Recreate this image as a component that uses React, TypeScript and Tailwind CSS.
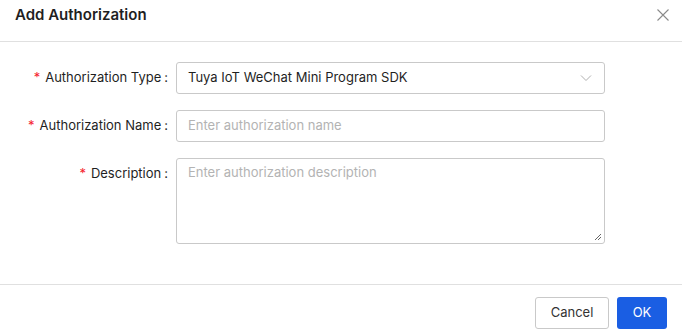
import React from "react";

const font = { fontFamily: "Inter, 'Noto Sans', sans-serif" };

function Label({ text }: { text: string }) {
  return (
    <div className="w-[176px] shrink-0 flex justify-end items-center pr-[8px] h-8 text-[13px] text-[#1f1f1f]">
      <span className="text-[#f5222d] mr-[5px] text-[13px]">*</span>
      <span>{text}</span>
      <span className="ml-[3px]">:</span>
    </div>
  );
}

export default function App() {
  return (
    <div className="w-[682px] h-[332px] bg-white flex flex-col" style={font}>
      <div className="h-[42px] flex items-center justify-between pl-[15px] pr-[12px] border-b border-[#e0e0e0]">
        <div className="text-[15px] font-semibold text-[#1f1f1f] -mt-[11px]">Add Authorization</div>
        <svg width="14" height="14" viewBox="0 0 14 14" className="-mt-[11px]">
          <path d="M1.5 1.5L12.5 12.5M12.5 1.5L1.5 12.5" stroke="#8a8a8a" strokeWidth="1.1" fill="none" />
        </svg>
      </div>
      <div className="flex-1 flex flex-col pt-[20px] gap-[16px] pr-[77px]">
        <div className="flex">
          <Label text="Authorization Type" />
          <div className="flex-1 h-8 border border-[#c9c9c9] rounded-[3px] flex items-center justify-between pl-[11px] pr-[12px] text-[13px] text-[#1f1f1f]">
            <span>Tuya IoT WeChat Mini Program SDK</span>
            <svg width="12" height="8" viewBox="0 0 12 8">
              <path d="M1 1.5L6 6.5L11 1.5" stroke="#b0b0b0" strokeWidth="1" fill="none" />
            </svg>
          </div>
        </div>
        <div className="flex">
          <Label text="Authorization Name" />
          <div className="flex-1 h-8 border border-[#c9c9c9] rounded-[3px] flex items-center pl-[11px] text-[13px] text-[#b3b3b3]">
            Enter authorization name
          </div>
        </div>
        <div className="flex">
          <Label text="Description" />
          <div className="flex-1 h-[86px] border border-[#c9c9c9] rounded-[3px] relative pl-[11px] pt-[4px] text-[13px] text-[#b3b3b3]">
            Enter authorization description
            <svg width="8" height="8" viewBox="0 0 8 8" className="absolute right-[2px] bottom-[2px]">
              <path d="M1 7L7 1M4 7L7 4" stroke="#555" strokeWidth="0.9" fill="none" />
            </svg>
          </div>
        </div>
      </div>
      <div className="h-[48px] border-t border-[#e0e0e0] flex items-center justify-end gap-2 pr-[15px] pt-[9px]">
        <button className="w-[74px] h-8 border border-[#c9c9c9] rounded-[3px] bg-white text-[13px] text-[#333]">Cancel</button>
        <button className="w-[50px] h-8 rounded-[3px] bg-[#1a5ee3] text-[13px] text-white">OK</button>
      </div>
    </div>
  );
}
